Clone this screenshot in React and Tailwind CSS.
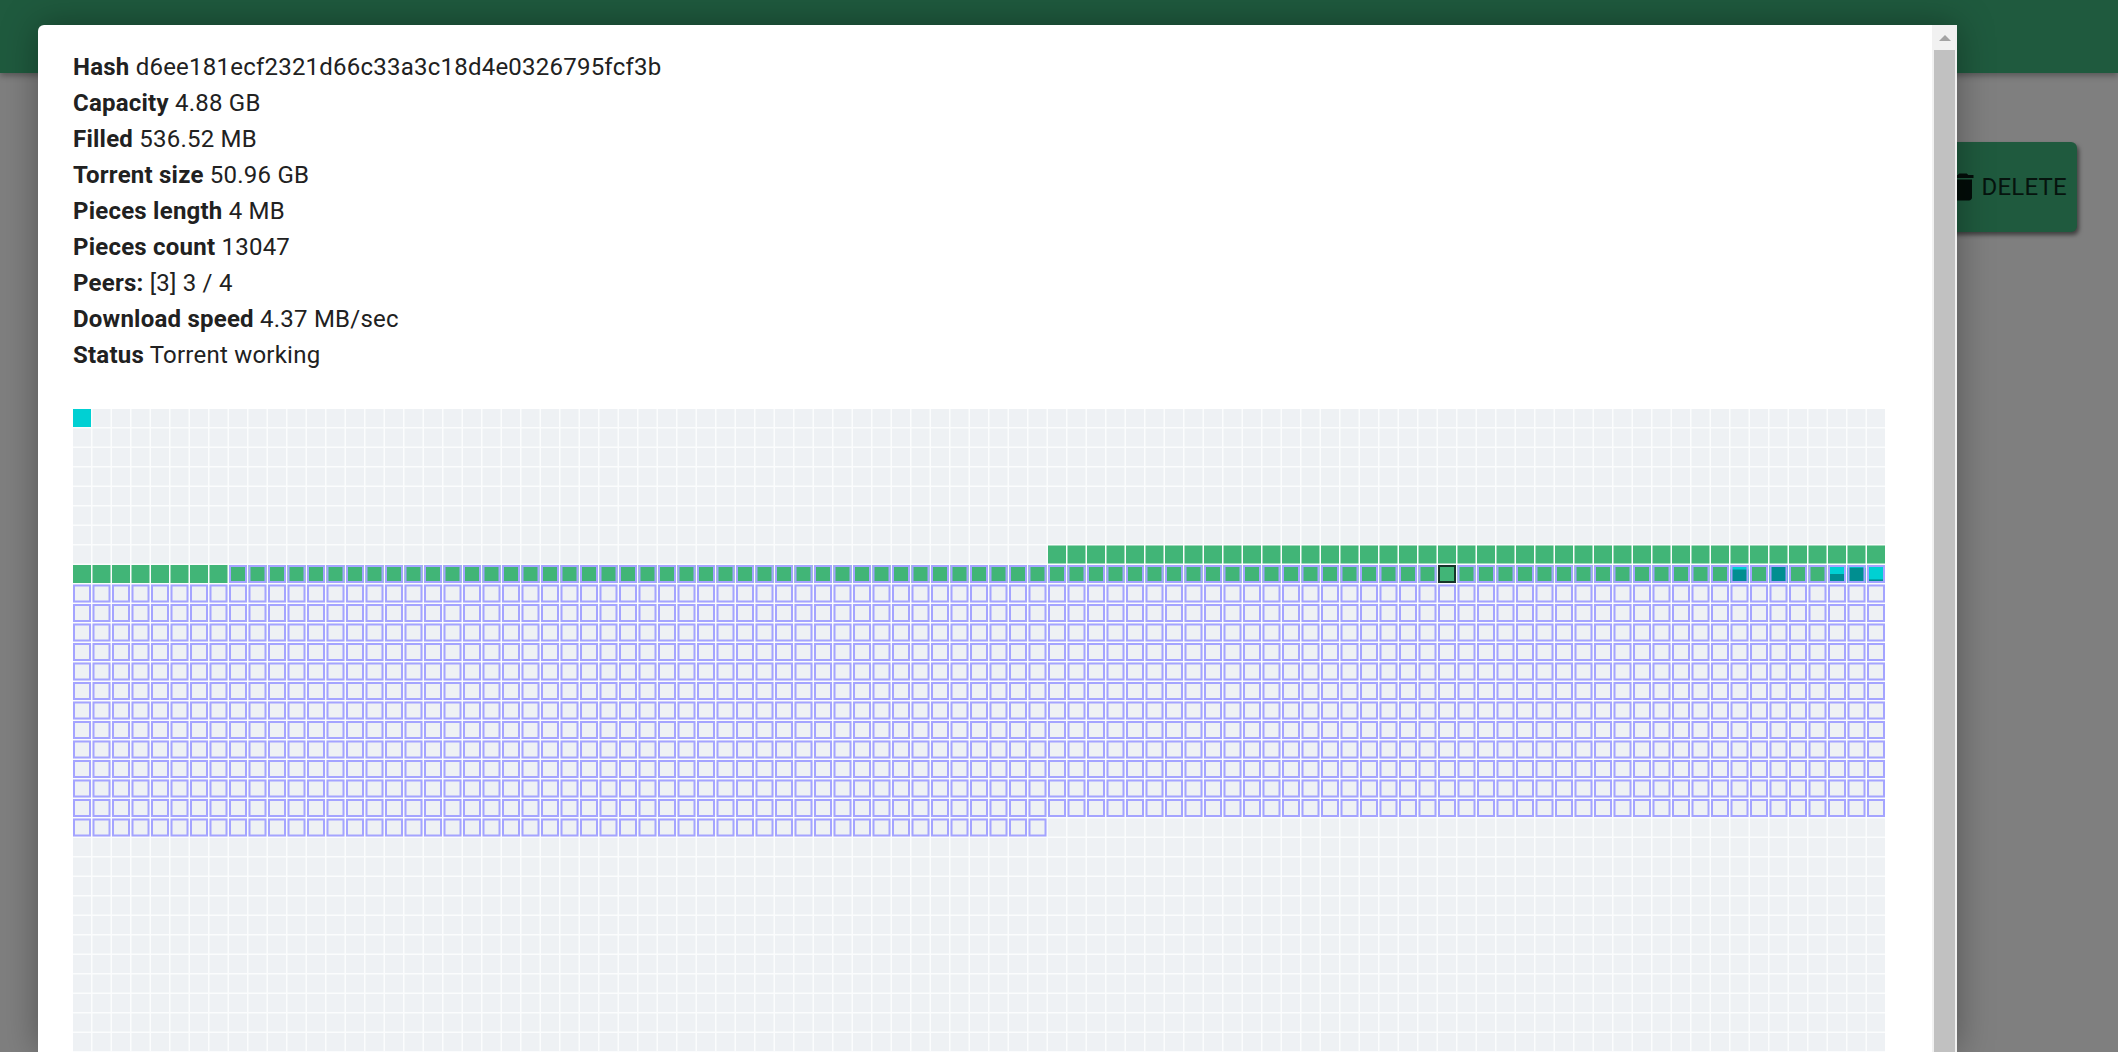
import React from "react"

const STATS = [
    ["Hash", "d6ee181ecf2321d66c33a3c18d4e0326795fcf3b"],
    ["Capacity", "4.88 GB"],
    ["Filled", "536.52 MB"],
    ["Torrent size", "50.96 GB"],
    ["Pieces length", "4 MB"],
    ["Pieces count", "13047"],
    ["Peers:", "[3] 3 / 4"],
    ["Download speed", "4.37 MB/sec"],
    ["Status", "Torrent working"],
]

const COLS = 93
const ROWS = 34
const PITCH = 19.5
const CELL = 18

// share of each partly loaded piece that is still light, from the top
const PARTIAL = { 85: 0.25, 87: 0.04, 90: 0.5, 91: 0.15, 92: 0.8 }

function Piece({ row, col }) {
    const x = col * PITCH
    const y = row * PITCH
    const filled = (row === 7 && col >= 50) || row === 8
    const reader = row === 8 && col === 70
    const buffered = !reader && ((row === 8 && col >= 8) || (row > 8 && row < 21) || (row === 21 && col < 50))
    const partial = row === 8 ? PARTIAL[col] : undefined
    const first = row === 0 && col === 0

    let fill = "#eef1f4"
    if (filled) fill = "#41b577"
    if (first || partial !== undefined) fill = "#00d0d3"

    return (
        <g>
            <rect x={x} y={y} width={CELL} height={CELL} fill={fill} />
            {partial !== undefined && (
                <rect x={x} y={y + CELL * partial} width={CELL} height={CELL * (1 - partial)} fill="#008e90" />
            )}
            {buffered && (
                <rect x={x + 1} y={y + 1} width={CELL - 2} height={CELL - 2} fill="none" stroke="#a4a4ff" strokeWidth="2" />
            )}
            {reader && (
                <rect x={x + 1} y={y + 1} width={CELL - 2} height={CELL - 2} fill="none" stroke="#17352a" strokeWidth="2" />
            )}
        </g>
    )
}

function PieceMap() {
    const cells = []
    for (let row = 0; row < ROWS; row++) {
        for (let col = 0; col < COLS; col++) {
            cells.push(<Piece key={row + "-" + col} row={row} col={col} />)
        }
    }
    return (
        <svg width={COLS * PITCH - 1.5} height={ROWS * PITCH} className="mt-9 block shrink-0 bg-[#fbfcfd]">
            {cells}
        </svg>
    )
}

function App() {
    return (
        <div className="relative h-[1052px] w-[2118px] overflow-hidden bg-[#7f7f7f] font-['Roboto',sans-serif]">
            <div className="h-[73px] bg-[#1f5a3e] shadow-[0_3px_6px_rgba(0,0,0,0.3)]" />

            <div className="flex justify-end pt-[69px] pr-[41px]">
                <button className="flex h-[90px] items-center rounded-[6px] bg-[#1f5a3e] pr-[10px] pl-[20px] text-[24px] tracking-[0.01em] text-[#06140e] shadow-[2px_3px_4px_rgba(0,0,0,0.5)]">
                    <svg viewBox="0 0 24 24" className="h-9 w-9" fill="#030d09">
                        <path d="M6 19c0 1.1.9 2 2 2h8c1.1 0 2-.9 2-2V7H6v12zM19 4h-3.5l-1-1h-5l-1 1H5v2h14V4z" />
                    </svg>
                    DELETE
                </button>
            </div>

            <div className="absolute top-[25px] left-[38px] flex h-[1027px] w-[1919px] overflow-hidden rounded-tl-[6px] bg-white shadow-[0_0_36px_rgba(0,0,0,0.35)]">
                <div className="flex-1 overflow-hidden pt-6 pl-[35px]">
                    {STATS.map(([label, value]) => (
                        <p key={label} className="text-[24px] leading-9 font-normal tracking-[0.00938em] text-[#212121]">
                            <span className="font-bold">{label}</span> {value}
                        </p>
                    ))}
                    <PieceMap />
                </div>

                <div className="flex w-[25px] shrink-0 flex-col bg-[#f1f1f1]">
                    <div className="flex h-[25px] items-center justify-center">
                        <div className="h-0 w-0 border-x-[6px] border-b-[6px] border-x-transparent border-b-[#a3a3a3]" />
                    </div>
                    <div className="mx-[2px] flex-1 bg-[#c1c1c1]" />
                </div>
            </div>
        </div>
    )
}

export default App
